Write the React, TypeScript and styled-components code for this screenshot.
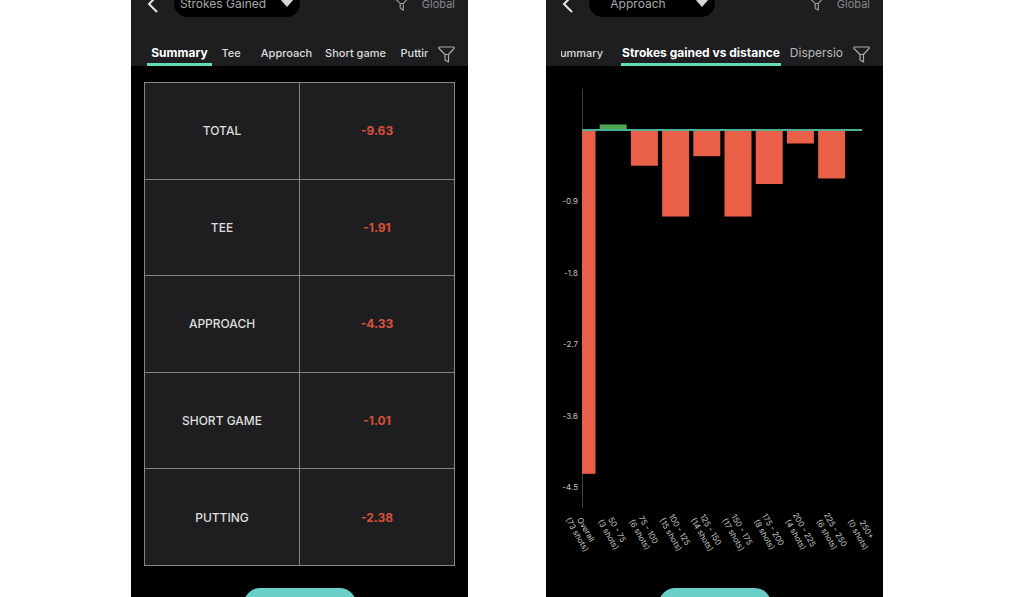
import React from "react";
import styled, { createGlobalStyle } from "styled-components";

const GlobalStyle = createGlobalStyle`
  * { box-sizing: border-box; }
  body {
    margin: 0;
    background: #fff;
    font-family: Inter, "Liberation Sans", sans-serif;
  }
  button, select { font-family: inherit; }
`;

const Page = styled.div`
  display: grid;
  grid-template-columns: 1fr 1fr;
  column-gap: 78px;
  height: 100vh;
  padding: 0 141px 0 131px;
  overflow: hidden;
`;

const Phone = styled.section`
  display: flex;
  flex-direction: column;
  min-width: 0;
  margin-top: -10px;
  background: #000;
`;

const Header = styled.header`
  flex: none;
  background: #1e1e20;
`;

const TopBar = styled.div`
  display: flex;
  align-items: center;
  height: 27px;
  padding: 0 13px 0 16px;
`;

const IconButton = styled.button`
  display: flex;
  flex: none;
  padding: 0;
  border: 0;
  background: none;
  color: #a9a9aa;
  cursor: pointer;
`;

const Picker = styled.label`
  display: flex;
  align-items: center;
  width: 126px;
  height: 27px;
  margin: 0 auto 0 14px;
  padding-right: 6px;
  border-radius: 14px;
  background: #000;
`;

const PickerSelect = styled.select`
  flex: 1;
  min-width: 0;
  height: 27px;
  padding: 0 8px 0 0;
  border: 0;
  appearance: none;
  background: none;
  color: #a9a9aa;
  font-size: 12px;
  text-align-last: center;
`;

const ScopeLink = styled.a`
  margin-left: 13px;
  color: #88888a;
  font-size: 11px;
  text-decoration: none;
`;

const TabBar = styled.div`
  display: flex;
  align-items: flex-end;
  justify-content: space-between;
  height: 49px;
  padding: 0 13px 0 15px;
`;

const TabViewport = styled.nav`
  flex: 1;
  min-width: 0;
  margin-right: 10px;
  overflow: hidden;
`;

const TabTrack = styled.div<{ $shift: number }>`
  display: flex;
  margin-left: ${(p) => p.$shift}px;
`;

const Tab = styled.button<{ $width: number; $active?: boolean; $light?: boolean }>`
  flex: none;
  width: ${(p) => p.$width}px;
  height: 26px;
  padding: 2px 0 0;
  border: 0;
  border-bottom: 3px solid ${(p) => (p.$active ? "#5fdcb8" : "transparent")};
  background: none;
  color: ${(p) => (p.$active ? "#fff" : p.$light ? "#b8b8b8" : "#dcdcdc")};
  font-size: ${(p) => (p.$active || p.$light ? 12 : 11)}px;
  font-weight: ${(p) => (p.$active ? 700 : p.$light ? 400 : 500)};
  white-space: nowrap;
  cursor: pointer;
`;

const FilterSlot = styled.div`
  padding-bottom: 3px;
`;

const Main = styled.main`
  flex: none;
  height: 522px;
  padding: 16px 13px 0;
`;

const ChartMain = styled(Main)`
  padding: 0;
`;

const Table = styled.table`
  width: 100%;
  height: 484px;
  border-collapse: collapse;
  table-layout: fixed;
  background: #1e1e20;
  font-size: 12px;
  text-align: center;
`;

const NameCell = styled.th`
  padding: 0;
  border: 1px solid #848484;
  color: #dedede;
  font-weight: 500;
`;

const ValueCell = styled.td`
  padding: 0;
  border: 1px solid #848484;
  color: #d8503b;
  font-weight: 700;
`;

const ActionButton = styled.button`
  flex: none;
  align-self: center;
  width: 112px;
  height: 36px;
  border: 0;
  border-radius: 16px;
  background: #69d0c8;
  cursor: pointer;
`;

const Chart = styled.svg`
  display: block;
  width: 100%;
  height: auto;
  overflow: visible;
`;

const TickLabel = styled.text`
  fill: #c4c4c4;
  font-size: 8px;
`;

function BackIcon() {
  return (
    <svg width="13" height="18" viewBox="0 0 13 18" fill="none" stroke="#e4e4e4" strokeWidth="2">
      <path d="M10 1 L2 9 L10 17" />
    </svg>
  );
}

function FunnelIcon({ size }: { size: number }) {
  return (
    <svg width={size} height={size} viewBox="0 0 17 17" fill="none" stroke="currentColor" strokeWidth="1.2" strokeLinejoin="round">
      <path d="M1 1 H16 V2.5 L10.5 8.5 V16 L7 14 V8.5 L1 2.5 Z M7 8.5 H10.5" />
    </svg>
  );
}

function Caret() {
  return (
    <svg width="14" height="9" viewBox="0 0 14 9">
      <path d="M1 0.5 H13 L7 7.5 Z" fill="#d6d6d6" stroke="#d6d6d6" strokeLinejoin="round" />
    </svg>
  );
}

type TabInfo = { label: string; width: number; active?: boolean; light?: boolean };

function ScreenHeader({ section, tabs, shift }: { section: string; tabs: TabInfo[]; shift: number }) {
  return (
    <Header>
      <TopBar>
        <IconButton aria-label="Back"><BackIcon /></IconButton>
        <Picker>
          <PickerSelect aria-label="Section" defaultValue={section}>
            <option>{section}</option>
          </PickerSelect>
          <Caret />
        </Picker>
        <IconButton aria-label="Scope filter"><FunnelIcon size={15} /></IconButton>
        <ScopeLink href="#global">Global</ScopeLink>
      </TopBar>
      <TabBar>
        <TabViewport>
          <TabTrack $shift={shift}>
            {tabs.map((t) => (
              <Tab key={t.label} $width={t.width} $active={t.active} $light={t.light}>{t.label}</Tab>
            ))}
          </TabTrack>
        </TabViewport>
        <FilterSlot>
          <IconButton aria-label="Filter"><FunnelIcon size={17} /></IconButton>
        </FilterSlot>
      </TabBar>
    </Header>
  );
}

const summaryTabs: TabInfo[] = [
  { label: "Summary", width: 65, active: true },
  { label: "Tee", width: 38 },
  { label: "Approach", width: 73 },
  { label: "Short game", width: 65 },
  { label: "Putting", width: 62 },
];

const approachTabs: TabInfo[] = [
  { label: "Summary", width: 86 },
  { label: "Strokes gained vs distance", width: 160, active: true },
  { label: "Dispersion", width: 78, light: true },
];

const totals = [
  ["TOTAL", "-9.63"],
  ["TEE", "-1.91"],
  ["APPROACH", "-4.33"],
  ["SHORT GAME", "-1.01"],
  ["PUTTING", "-2.38"],
];

const distances = [
  { range: "Overall", shots: 73, value: -4.33 },
  { range: "50 - 75", shots: 3, value: 0.07 },
  { range: "75 - 100", shots: 6, value: -0.45 },
  { range: "100 - 125", shots: 15, value: -1.09 },
  { range: "125 - 150", shots: 14, value: -0.33 },
  { range: "150 - 175", shots: 17, value: -1.09 },
  { range: "175 - 200", shots: 8, value: -0.68 },
  { range: "200 - 225", shots: 4, value: -0.17 },
  { range: "225 - 250", shots: 6, value: -0.61 },
  { range: "250+", shots: 0, value: 0 },
];

const ticks = [-0.9, -1.8, -2.7, -3.6, -4.5];

const ORIGIN_X = 36;
const ZERO_Y = 64;
const STEP = 31.2;
const BAR = 27;
const UNIT = 79.4;

function DistanceChart() {
  return (
    <Chart viewBox="0 0 337 522" role="img" aria-label="Strokes gained vs distance">
      <path d="M36.5 23 V442" stroke="#3c3c3c" />
      {distances.map((d, i) => {
        const center = ORIGIN_X + i * STEP;
        const left = i === 0 ? ORIGIN_X : center - BAR / 2;
        const height = Math.abs(d.value) * UNIT;
        return (
          <rect
            key={d.range}
            x={left}
            y={d.value > 0 ? ZERO_Y - height : ZERO_Y}
            width={i === 0 ? BAR / 2 : BAR}
            height={height}
            fill={d.value > 0 ? "#4ea64f" : "#ea5f47"}
          />
        );
      })}
      <path d={`M36 ${ZERO_Y} H316`} stroke="#4bb096" strokeWidth="2" />
      {ticks.map((t) => (
        <TickLabel key={t} x="32" y={ZERO_Y - t * UNIT + 3} textAnchor="end">{t}</TickLabel>
      ))}
      {distances.map((d, i) => (
        <g key={d.range} transform={`translate(${ORIGIN_X + i * STEP - 2} 467) rotate(60)`}>
          <TickLabel textAnchor="middle" y="-4">{d.range}</TickLabel>
          <TickLabel textAnchor="middle" y="6">{`(${d.shots} shots)`}</TickLabel>
        </g>
      ))}
    </Chart>
  );
}

export default function App() {
  return (
    <>
      <GlobalStyle />
      <Page>
        <Phone>
          <ScreenHeader section="Strokes Gained" tabs={summaryTabs} shift={1} />
          <Main>
            <Table>
              <tbody>
                {totals.map(([name, value]) => (
                  <tr key={name}>
                    <NameCell scope="row">{name}</NameCell>
                    <ValueCell>{value}</ValueCell>
                  </tr>
                ))}
              </tbody>
            </Table>
          </Main>
          <ActionButton aria-label="Continue" />
        </Phone>
        <Phone>
          <ScreenHeader section="Approach" tabs={approachTabs} shift={-26} />
          <ChartMain>
            <DistanceChart />
          </ChartMain>
          <ActionButton aria-label="Continue" />
        </Phone>
      </Page>
    </>
  );
}
